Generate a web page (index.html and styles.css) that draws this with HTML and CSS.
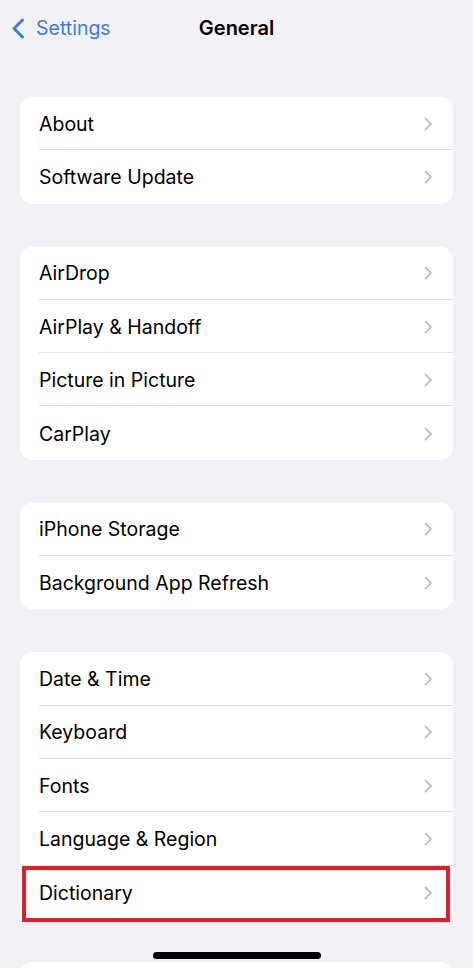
FILE: index.html
```html
<!DOCTYPE html>
<html>
<head>
<meta charset="utf-8">
<link rel="stylesheet" href="styles.css">
</head>
<body>
<div class="nav">
  <div class="back">
    <svg class="back-chev" width="14" height="21" viewBox="0 0 14 21"><path d="M11.5 2 L3 10.5 L11.5 19" fill="none" stroke="#3a80d6" stroke-width="3" stroke-linecap="round" stroke-linejoin="round"/></svg>
    <span class="back-text">Settings</span>
  </div>
  <div class="title">General</div>
</div>

<div class="group">
  <div class="row"><div class="row-inner"><span>About</span><svg class="chev" width="9" height="14" viewBox="0 0 9 14"><path d="M1.5 1.5 L7 7 L1.5 12.5" fill="none" stroke="#c2c2c6" stroke-width="2" stroke-linecap="round" stroke-linejoin="round"/></svg></div></div>
  <div class="row"><div class="row-inner"><span>Software Update</span><svg class="chev" width="9" height="14" viewBox="0 0 9 14"><path d="M1.5 1.5 L7 7 L1.5 12.5" fill="none" stroke="#c2c2c6" stroke-width="2" stroke-linecap="round" stroke-linejoin="round"/></svg></div></div>
</div>

<div class="group">
  <div class="row"><div class="row-inner"><span>AirDrop</span><svg class="chev" width="9" height="14" viewBox="0 0 9 14"><path d="M1.5 1.5 L7 7 L1.5 12.5" fill="none" stroke="#c2c2c6" stroke-width="2" stroke-linecap="round" stroke-linejoin="round"/></svg></div></div>
  <div class="row"><div class="row-inner"><span>AirPlay &amp; Handoff</span><svg class="chev" width="9" height="14" viewBox="0 0 9 14"><path d="M1.5 1.5 L7 7 L1.5 12.5" fill="none" stroke="#c2c2c6" stroke-width="2" stroke-linecap="round" stroke-linejoin="round"/></svg></div></div>
  <div class="row"><div class="row-inner"><span>Picture in Picture</span><svg class="chev" width="9" height="14" viewBox="0 0 9 14"><path d="M1.5 1.5 L7 7 L1.5 12.5" fill="none" stroke="#c2c2c6" stroke-width="2" stroke-linecap="round" stroke-linejoin="round"/></svg></div></div>
  <div class="row"><div class="row-inner"><span>CarPlay</span><svg class="chev" width="9" height="14" viewBox="0 0 9 14"><path d="M1.5 1.5 L7 7 L1.5 12.5" fill="none" stroke="#c2c2c6" stroke-width="2" stroke-linecap="round" stroke-linejoin="round"/></svg></div></div>
</div>

<div class="group">
  <div class="row"><div class="row-inner"><span>iPhone Storage</span><svg class="chev" width="9" height="14" viewBox="0 0 9 14"><path d="M1.5 1.5 L7 7 L1.5 12.5" fill="none" stroke="#c2c2c6" stroke-width="2" stroke-linecap="round" stroke-linejoin="round"/></svg></div></div>
  <div class="row"><div class="row-inner"><span>Background App Refresh</span><svg class="chev" width="9" height="14" viewBox="0 0 9 14"><path d="M1.5 1.5 L7 7 L1.5 12.5" fill="none" stroke="#c2c2c6" stroke-width="2" stroke-linecap="round" stroke-linejoin="round"/></svg></div></div>
</div>

<div class="group">
  <div class="row"><div class="row-inner"><span>Date &amp; Time</span><svg class="chev" width="9" height="14" viewBox="0 0 9 14"><path d="M1.5 1.5 L7 7 L1.5 12.5" fill="none" stroke="#c2c2c6" stroke-width="2" stroke-linecap="round" stroke-linejoin="round"/></svg></div></div>
  <div class="row"><div class="row-inner"><span>Keyboard</span><svg class="chev" width="9" height="14" viewBox="0 0 9 14"><path d="M1.5 1.5 L7 7 L1.5 12.5" fill="none" stroke="#c2c2c6" stroke-width="2" stroke-linecap="round" stroke-linejoin="round"/></svg></div></div>
  <div class="row"><div class="row-inner"><span>Fonts</span><svg class="chev" width="9" height="14" viewBox="0 0 9 14"><path d="M1.5 1.5 L7 7 L1.5 12.5" fill="none" stroke="#c2c2c6" stroke-width="2" stroke-linecap="round" stroke-linejoin="round"/></svg></div></div>
  <div class="row"><div class="row-inner"><span>Language &amp; Region</span><svg class="chev" width="9" height="14" viewBox="0 0 9 14"><path d="M1.5 1.5 L7 7 L1.5 12.5" fill="none" stroke="#c2c2c6" stroke-width="2" stroke-linecap="round" stroke-linejoin="round"/></svg></div></div>
  <div class="row highlighted"><div class="row-inner"><span>Dictionary</span><svg class="chev" width="9" height="14" viewBox="0 0 9 14"><path d="M1.5 1.5 L7 7 L1.5 12.5" fill="none" stroke="#c2c2c6" stroke-width="2" stroke-linecap="round" stroke-linejoin="round"/></svg></div><div class="highlight-box"></div></div>
</div>

<div class="group">
  <div class="row"><div class="row-inner"></div></div>
</div>

<div class="home-indicator"></div>
</body>
</html>
```

FILE: styles.css
```css
html, body {
  margin: 0;
  padding: 0;
  background: #f1f1f6;
  font-family: Inter, "Liberation Sans", Arial, sans-serif;
  overflow: hidden;
}

body {
  height: 968px;
}

.nav {
  height: 56px;
  display: flex;
  align-items: center;
  position: relative;
}

.back {
  display: flex;
  align-items: center;
  padding-left: 11px;
  gap: 11px;
}

.back-chev {
  display: block;
}

.back-text {
  color: #3a80d6;
  font-size: 19.5px;
}

.title {
  position: absolute;
  left: 0;
  right: 0;
  text-align: center;
  font-size: 20px;
  font-weight: 600;
  color: #000;
  pointer-events: none;
}

.group {
  background: #fff;
  margin: 41px 20px 0 20px;
  border-radius: 12px;
}

.group + .group {
  margin-top: 43px;
}

.row {
  padding-left: 19px;
  position: relative;
}

.row-inner {
  height: 53.3px;
  box-sizing: border-box;
  border-bottom: 1px solid #e2e2e6;
  display: flex;
  align-items: center;
  justify-content: space-between;
  padding-right: 20px;
  padding-top: 1px;
  font-size: 19.5px;
  color: #000;
}

.row:last-child .row-inner {
  border-bottom: none;
}

.chev {
  display: block;
}

.highlight-box {
  position: absolute;
  left: 2px;
  right: 3px;
  top: 0;
  bottom: -3px;
  border: 4px solid #e51c2a;
}

.home-indicator {
  position: fixed;
  left: 153px;
  top: 952px;
  width: 168px;
  height: 7px;
  border-radius: 4px;
  background: #000;
}
```
